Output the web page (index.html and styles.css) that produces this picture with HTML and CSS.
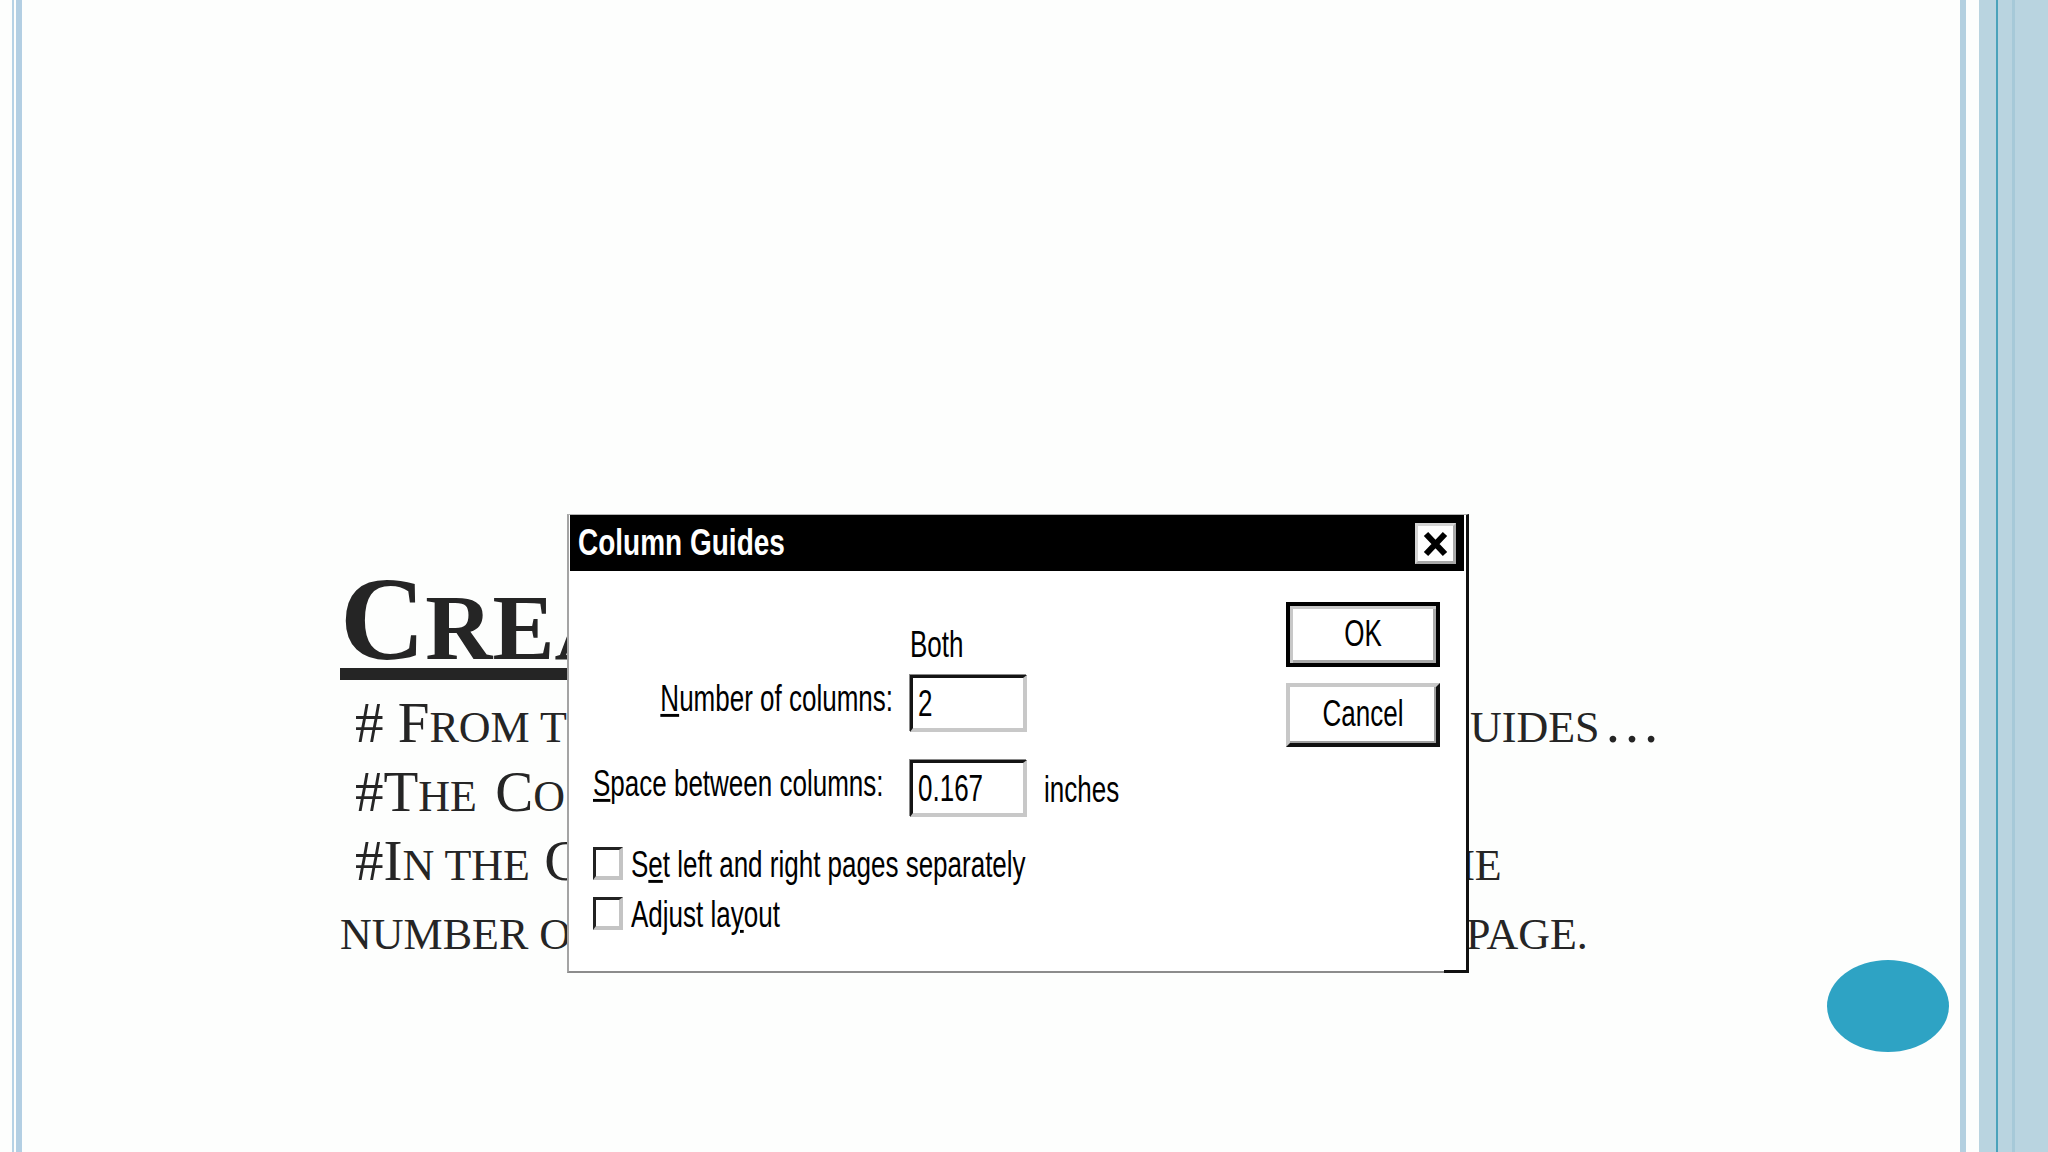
FILE: index.html
```html
<!DOCTYPE html>
<html lang="en">
<head>
<meta charset="utf-8">
<title>Creating Columns</title>
<link rel="stylesheet" href="styles.css">
</head>
<body>
<div class="slide">
  <div class="edge-left"><span class="ln1"></span><span class="ln2"></span></div>
  <main class="content">
    <h1 class="title">C<span class="sm">REA</span></h1>
    <div class="bullets">
      <div class="line ind">
        <div class="lead w1">#&nbsp;F<span class="sm">ROM T</span></div>
        <div class="tail"><span class="sm">UIDES</span><span class="ell">…</span></div>
      </div>
      <div class="line ind">
        <div class="lead w2">#T<span class="sm wide">HE</span> C<span class="sm">O</span></div>
      </div>
      <div class="line ind">
        <div class="lead w3">#I<span class="sm">N THE</span> C</div>
        <div class="tail"><span class="sm">HE</span></div>
      </div>
      <div class="line cont">
        <div class="lead w4"><span class="sm">NUMBER O</span></div>
        <div class="tail"><span class="sm">PAGE.</span></div>
      </div>
    </div>
  </main>
  <div class="edge-right">
    <span class="rthin"></span>
    <div class="band"><span class="bl1"></span><span class="bl2"></span></div>
  </div>
  <div class="dot"></div>

  <div class="dialog">
    <div class="titlebar">
      <span class="ttl"><span class="tx">Column Guides</span></span>
      <div class="close">
        <svg width="35" height="35" viewBox="0 0 35 35"><path d="M8 8 L27 28 M27 8 L8 28" stroke="#000" stroke-width="6" fill="none"/></svg>
      </div>
    </div>
    <div class="dbody">
      <div class="form">
        <div class="grid">
          <div class="both"><span class="tx">Both</span></div>
          <div class="lbl r1"><span class="tx"><u>N</u>umber of columns:</span></div>
          <div class="field f1"><span class="tx">2</span></div>
          <div class="lbl r2"><span class="tx"><u>S</u>pace between columns:</span></div>
          <div class="field f2"><span class="tx">0.167</span></div>
          <div class="unit"><span class="tx">inches</span></div>
        </div>
        <div class="checks">
          <div class="chk"><span class="box"></span><span class="tx">S<u>e</u>t left and right pages separately</span></div>
          <div class="chk"><span class="box"></span><span class="tx">Adjust la<u>y</u>out</span></div>
        </div>
      </div>
      <div class="buttons">
        <div class="btn ok"><span class="tx">OK</span></div>
        <div class="btn cancel"><span class="tx">Cancel</span></div>
      </div>
    </div>
  </div>
</div>
</body>
</html>
```

FILE: styles.css
```css
html, body {
  margin: 0;
  padding: 0;
  background: #fdfefd;
}

.slide {
  position: relative;
  width: 2048px;
  height: 1152px;
  display: flex;
  overflow: hidden;
  background: #fdfefd;
  font-family: "Liberation Serif", "Times New Roman", serif;
  color: #252525;
}

/* left frame lines */
.edge-left {
  flex: none;
  width: 24px;
  box-sizing: border-box;
  padding-left: 12px;
  display: flex;
  gap: 2px;
}
.ln1 { width: 2px; background: #b6d2e5; }
.ln2 { width: 6px; background: #b3cfe3; }

/* slide content */
.content {
  flex: none;
  width: 1936px;
  box-sizing: border-box;
  padding: 572px 0 0 316px;
}

.title {
  width: 300px;
  margin: 0;
  font-size: 118px;
  line-height: 95.6px;
  font-weight: bold;
  white-space: nowrap;
  border-bottom: 12px solid #252525;
}
.title .sm {
  font-size: 93px;
  line-height: 0;
}

.bullets {
  margin-top: 8px;
}
.line {
  display: flex;
  height: 69px;
  font-size: 57px;
  line-height: 69px;
  white-space: nowrap;
}
.line.ind { padding-left: 15px; }
.line.cont { padding-left: 0; }
.lead {
  flex: none;
}
.w1 { width: 1115px; }
.w2 { width: 1111px; }
.w3 { width: 1088px; }
.w4 { width: 1126px; }
.line .sm {
  font-size: 44px;
  line-height: 1;
}
.line .wide {
  margin-right: 4px;
}
.ell {
  margin-left: 4px;
}

/* right frame */
.edge-right {
  flex: none;
  width: 88px;
  display: flex;
}
.rthin {
  width: 6px;
  margin-right: 13px;
  background: #b4d0e0;
}
.band {
  flex: 1;
  background: #b9d4e0;
  display: flex;
  padding-left: 17px;
  gap: 14px;
}
.bl1 { width: 2px; background: #4aa2bb; }
.bl2 { width: 3px; background: #a6c9d8; }

.dot {
  position: absolute;
  left: 1827px;
  top: 960px;
  width: 122px;
  height: 92px;
  border-radius: 50%;
  background: #2ea3c4;
}

/* dialog window */
.dialog {
  position: absolute;
  left: 567px;
  top: 514px;
  width: 902px;
  height: 459px;
  box-sizing: border-box;
  border-style: solid;
  border-width: 1px 3px 2px 2px;
  border-color: #b4b4b4 #111 #8c8c8c #a4a4a4;
  padding: 0 2px 0 1px;
  background: #fff;
  font-family: "Liberation Sans", Arial, sans-serif;
  font-size: 26px;
  line-height: 26px;
  color: #000;
  display: flex;
  flex-direction: column;
}
.dialog::after {
  content: "";
  position: absolute;
  right: -3px;
  bottom: -2px;
  width: 22px;
  height: 26px;
  border-right: 3px solid #111;
  border-bottom: 3px solid #111;
}

.tx {
  display: inline-block;
  white-space: nowrap;
  transform: scaleY(1.45);
}

.titlebar {
  flex: none;
  height: 56px;
  background: #000;
  display: flex;
  align-items: center;
  justify-content: space-between;
  padding: 0 8px;
}
.ttl {
  font-weight: bold;
  font-size: 28px;
  line-height: 28px;
  color: #fff;
}
.ttl .tx {
  transform: scaleY(1.3);
}
.close {
  width: 41px;
  height: 41px;
  box-sizing: border-box;
  border: 3px solid;
  border-color: #d4d4d4 #a8a8a8 #a8a8a8 #d4d4d4;
  background: #fff;
  display: flex;
  align-items: center;
  justify-content: center;
}
.close svg { display: block; }

.dbody {
  flex: 1;
  display: flex;
  justify-content: space-between;
  padding: 31px 24px 0 23px;
}
.form {
  margin-top: 23px;
}
.grid {
  display: grid;
  grid-template-columns: 300px 117px auto;
  grid-template-rows: 50px 57px 28px 57px;
  column-gap: 17px;
}
.both {
  grid-column: 2;
  grid-row: 1;
  padding-top: 6px;
}
.lbl {
  grid-column: 1;
  align-self: center;
  margin-bottom: 12px;
}
.r1 { grid-row: 2; justify-self: end; }
.r2 { grid-row: 4; justify-self: start; }
.field {
  grid-column: 2;
  box-sizing: border-box;
  border-style: solid;
  border-width: 3px 4px 4px 3px;
  border-color: #141414 #c8c8c8 #c8c8c8 #141414;
  box-shadow: -1px -1px 0 #8a8a8a;
  background: #fff;
  display: flex;
  align-items: center;
  padding-left: 5px;
}
.f1 { grid-row: 2; }
.f2 { grid-row: 4; }
.unit {
  grid-column: 3;
  grid-row: 4;
  align-self: center;
}

.checks {
  margin-top: 30px;
  display: flex;
  flex-direction: column;
  gap: 17px;
}
.chk {
  display: flex;
  align-items: center;
  gap: 8px;
  height: 33px;
}
.box {
  flex: none;
  width: 30px;
  height: 33px;
  box-sizing: border-box;
  border-style: solid;
  border-width: 3px 4px 4px 3px;
  border-color: #222 #c4c4c4 #c4c4c4 #222;
  background: #fff;
}

.buttons {
  display: flex;
  flex-direction: column;
  gap: 16px;
  width: 154px;
}
.btn {
  box-sizing: border-box;
  display: flex;
  align-items: center;
  justify-content: center;
  padding-bottom: 4px;
  background: #fff;
}
.ok {
  height: 65px;
  border: 4px solid #000;
  box-shadow: inset 3px 3px 0 #c8c8c8, inset -3px -3px 0 #a8a8a8;
}
.cancel {
  height: 64px;
  border-style: solid;
  border-width: 4px;
  border-color: #c8c8c8 #111 #111 #c8c8c8;
  box-shadow: inset -2px -2px 0 #a0a0a0;
}
```
